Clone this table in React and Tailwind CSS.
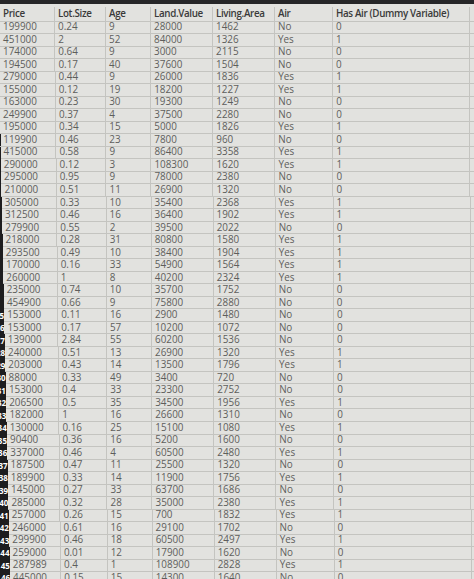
import React from "react";

const rows = [
  ["199900", "0.24", "9", "28000", "1462", "No"],
  ["451000", "2", "52", "84000", "1326", "Yes"],
  ["174000", "0.64", "9", "3000", "2115", "No"],
  ["194500", "0.17", "40", "37600", "1504", "No"],
  ["279000", "0.44", "9", "26000", "1836", "Yes"],
  ["155000", "0.12", "19", "18200", "1227", "Yes"],
  ["163000", "0.23", "30", "19300", "1249", "No"],
  ["249900", "0.37", "4", "37500", "2280", "No"],
  ["195000", "0.34", "15", "5000", "1826", "Yes"],
  ["119900", "0.46", "23", "7800", "960", "No"],
  ["415000", "0.58", "9", "86400", "3358", "Yes"],
  ["290000", "0.12", "3", "108300", "1620", "Yes"],
  ["295000", "0.95", "9", "78000", "2380", "No"],
  ["210000", "0.51", "11", "26900", "1320", "No"],
  ["305000", "0.33", "10", "35400", "2368", "Yes"],
  ["312500", "0.46", "16", "36400", "1902", "Yes"],
  ["279900", "0.55", "2", "39500", "2022", "No"],
  ["218000", "0.28", "31", "80800", "1580", "Yes"],
  ["293500", "0.49", "10", "38400", "1904", "Yes"],
  ["170000", "0.16", "33", "54900", "1564", "Yes"],
  ["260000", "1", "8", "40200", "2324", "Yes"],
  ["235000", "0.74", "10", "35700", "1752", "No"],
  ["454900", "0.66", "9", "75800", "2880", "No"],
  ["153000", "0.11", "16", "2900", "1480", "No"],
  ["153000", "0.17", "57", "10200", "1072", "No"],
  ["139000", "2.84", "55", "60200", "1536", "No"],
  ["240000", "0.51", "13", "26900", "1320", "Yes"],
  ["203000", "0.43", "14", "13500", "1796", "Yes"],
  ["88000", "0.33", "49", "3400", "720", "No"],
  ["153000", "0.4", "33", "23300", "2752", "No"],
  ["206500", "0.5", "35", "34500", "1956", "Yes"],
  ["182000", "1", "16", "26600", "1310", "No"],
  ["130000", "0.16", "25", "15100", "1080", "Yes"],
  ["90400", "0.36", "16", "5200", "1600", "No"],
  ["337000", "0.46", "4", "60500", "2480", "Yes"],
  ["187500", "0.47", "11", "25500", "1320", "No"],
  ["189900", "0.33", "14", "11900", "1756", "Yes"],
  ["145000", "0.27", "33", "63700", "1686", "No"],
  ["285000", "0.32", "28", "35000", "2380", "Yes"],
  ["257000", "0.26", "15", "700", "1832", "Yes"],
  ["246000", "0.61", "16", "29100", "1702", "No"],
  ["299900", "0.46", "18", "60500", "2497", "Yes"],
  ["259000", "0.01", "12", "17900", "1620", "No"],
  ["287989", "0.4", "1", "108900", "2828", "Yes"],
  ["445000", "0.15", "15", "14300", "1640", "No"],
];

const cell = "h-full flex items-center border-r border-b border-[#c4c4c0] pl-[3px] whitespace-nowrap";

function Row({ values, index, header }) {
  // the photo is a little skewed: row labels creep in from the left further down
  const labelW = header ? 0 : Math.min(11, Math.max(0, (index - 8) * 0.28));
  const priceW = 55 + index * 0.14 - labelW;
  const lotW = 106 - 55 - index * 0.1;
  const text = header
    ? "font-semibold text-[#3a3a3a] text-[9.8px] tracking-[-0.35px] pt-[3px]"
    : "text-[#5e5e5c] text-[9.9px]";

  return (
    <div className={`flex ${header ? "h-[17.5px]" : "h-[12.53px]"} ${text}`}>
      <div
        className="h-full shrink-0 bg-[#1d1d1f] text-white font-bold text-[8px] flex items-center justify-end overflow-hidden"
        style={{ width: labelW }}
      >
        {labelW >= 4 ? index + 2 : ""}
      </div>
      <div className={`${cell} shrink-0`} style={{ width: priceW }}>{values[0]}</div>
      <div className={`${cell} shrink-0`} style={{ width: lotW }}>{values[1]}</div>
      <div className={`${cell} w-[45px] shrink-0`}>{values[2]}</div>
      <div className={`${cell} w-[62px] shrink-0`}>{values[3]}</div>
      <div className={`${cell} w-[62px] shrink-0`}>{values[4]}</div>
      <div className={`${cell} w-[58px] shrink-0`}>{values[5]}</div>
      <div className={`${cell} w-[137px] shrink-0`}>{values[6]}</div>
      <div className={`${cell} flex-1 border-r-0`}></div>
    </div>
  );
}

export default function App() {
  return (
    <div
      className="w-[474px] h-[579px] overflow-hidden bg-[#e2e2df] leading-none"
      style={{ fontFamily: '"Open Sans", "Noto Sans", sans-serif' }}
    >
      <div className="h-[4px] bg-[#262628]"></div>
      <Row header index={0} values={["Price", "Lot.Size", "Age", "Land.Value", "Living.Area", "Air", "Has Air (Dummy Variable)"]} />
      {rows.map((r, i) => (
        <Row key={i} index={i} values={[...r, r[5] === "Yes" ? "1" : "0"]} />
      ))}
    </div>
  );
}
